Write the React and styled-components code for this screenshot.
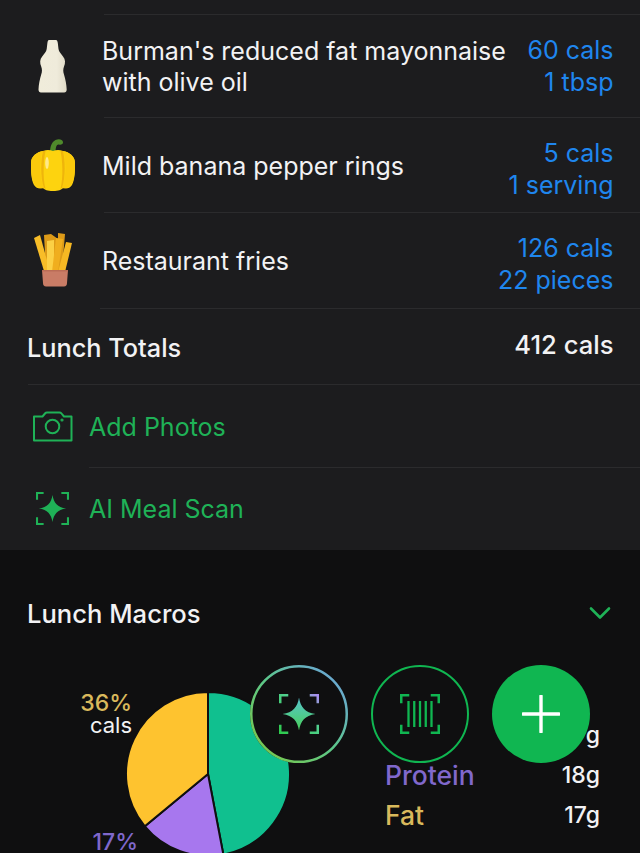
import styled, { createGlobalStyle } from "styled-components";

const COLORS = {
  card: "#1c1c1e",
  page: "#0f0f10",
  line: "#2b2b2d",
  text: "#f2f2f4",
  blue: "#1f86ee",
  green: "#1fb257",
  fab: "#10b651",
  teal: "#10c08f",
  purple: "#a777ee",
  yellow: "#fec32f",
  purpleText: "#8068cc",
  yellowText: "#d9b95c",
};

const GlobalStyle = createGlobalStyle`
  html, body { margin: 0; padding: 0; background: ${COLORS.page}; }
  body { font-family: Inter, "Liberation Sans", sans-serif; }
`;

const Screen = styled.div`
  position: relative;
  width: 640px;
  height: 853px;
  overflow: hidden;
  background: ${COLORS.page};
  color: ${COLORS.text};
`;

const Card = styled.section`
  background: ${COLORS.card};
  padding-top: 14px;
  height: 536px;
`;

const FoodRow = styled.div`
  display: flex;
  height: ${(p) => p.$h}px;
`;

const FoodIcon = styled.div`
  width: 104px;
  flex: none;
  display: flex;
  align-items: center;
  justify-content: center;
  padding-left: 1px;
  box-sizing: border-box;
`;

const FoodBody = styled.div`
  flex: 1;
  display: flex;
  align-items: center;
  justify-content: space-between;
  border-top: 1px solid ${COLORS.line};
  padding-right: 26.5px;
`;

const FoodName = styled.div`
  font-size: 25px;
  line-height: 31px;
  margin-left: -2px;
  padding-top: 2px;
  white-space: nowrap;
`;

const FoodCals = styled.div`
  align-self: flex-start;
  padding-top: 20px;
  font-size: 25px;
  line-height: 31.5px;
  color: ${COLORS.blue};
  text-align: right;
  white-space: nowrap;
`;

const Separator = styled.div`
  height: 1px;
  margin-left: 100px;
  background: ${COLORS.line};
`;

const TotalsRow = styled.div`
  height: 75px;
  padding: 0 26.5px 0 27px;
  display: flex;
  justify-content: space-between;
  align-items: center;
`;

const TotalsLabel = styled.div`
  font-size: 25.3px;
  font-weight: 500;
  margin-top: 2px;
`;

const TotalsValue = styled.div`
  font-size: 25.6px;
  font-weight: 500;
  margin-top: -4px;
`;

const ActionRow = styled.div`
  height: ${(p) => (p.$first ? 82 : 83)}px;
  display: flex;
`;

const ActionIcon = styled.div`
  width: ${(p) => (p.$first ? 61 : 89)}px;
  flex: none;
  display: flex;
  align-items: center;
  justify-content: ${(p) => (p.$first ? "flex-start" : "center")};
  padding-left: ${(p) => (p.$first ? 5 : 16)}px;
  box-sizing: border-box;
`;

const ActionLabel = styled.div`
  flex: 1;
  display: flex;
  align-items: center;
  font-size: 25px;
  color: ${COLORS.green};
  border-top: 1px solid ${(p) => (p.$first ? "transparent" : COLORS.line)};
`;

const FirstActionWrap = styled.div`
  border-top: 1px solid ${COLORS.line};
  margin-left: 28px;
`;

const MacrosSection = styled.section`
  padding: 0 27px;
`;

const MacrosHeader = styled.div`
  display: flex;
  align-items: center;
  justify-content: space-between;
  height: 126px;
  padding-right: 2px;
`;

const MacrosTitle = styled.h2`
  margin: 0;
  font-size: 25.6px;
  font-weight: 500;
`;

const MacrosBody = styled.div`
  display: flex;
  height: 200px;
`;

const ChartWrap = styled.div`
  position: relative;
  width: 358px;
  flex: none;
`;

const PieSvg = styled.svg`
  position: absolute;
  left: 99px;
  top: 16px;
`;

const PctLabel = styled.div`
  position: absolute;
  right: ${(p) => p.$right}px;
  top: ${(p) => p.$top}px;
  text-align: right;
  font-size: 22px;
  line-height: 22px;
  color: ${COLORS.text};
`;

const Pct = styled.div`
  font-size: 23px;
  color: ${(p) => p.$color};
  font-weight: 500;
`;

const MacroList = styled.div`
  flex: 1;
  display: flex;
  flex-direction: column;
  padding-top: 39px;
  padding-right: 13px;
`;

const MacroRow = styled.div`
  display: flex;
  justify-content: space-between;
  align-items: center;
  height: 40px;
`;

const MacroName = styled.span`
  font-size: 26.5px;
  font-weight: 500;
  color: ${(p) => p.$color};
`;

const MacroValue = styled.span`
  font-size: 23px;
  font-weight: 500;
`;

const Fab = styled.button`
  position: absolute;
  top: 665px;
  left: ${(p) => p.$left}px;
  width: 98px;
  height: 98px;
  padding: 0;
  box-sizing: border-box;
  border-radius: 50%;
  display: flex;
  align-items: center;
  justify-content: center;
  background: ${(p) => p.$bg || COLORS.page};
  border: ${(p) => (p.$ring ? `2.5px solid ${p.$ring}` : "none")};
`;

const FabRingSvg = styled.svg`
  position: absolute;
  left: 0;
  top: 0;
`;

const MayoIcon = () => (
  <svg width="29" height="54" viewBox="0 0 29 54">
    <defs>
      <linearGradient id="mayo" x1="0" x2="1" y1="0" y2="0">
        <stop offset="0" stopColor="#f0ecda" />
        <stop offset="0.65" stopColor="#efebdb" />
        <stop offset="1" stopColor="#dfdac6" />
      </linearGradient>
    </defs>
    <path
      d="M11 1h7c1 0 1.500 1 1.800 3l.7 6c.5 3 2 4 4.500 7.500 2.500 3 2.500 6.500 1 10-1 3-1 5 0 8 1.500 5 2.500 10 2.700 15 0 2-1 3-2.500 3H3C1.500 53.500.5 52.500.5 50.500c.2-5 1.200-10 2.700-15 1-3 1-5 0-8-1.500-3.500-1.500-7 1-10C6.700 14 8.200 13 8.700 10l.7-6c.3-2 .6-3 1.600-3z"
      fill="url(#mayo)"
    />
  </svg>
);

const PepperIcon = () => (
  <svg width="44" height="53" viewBox="0 0 44 53">
    <path d="M19 15c0-6 1.500-11 5.500-13 3-1.500 7-1 7.500 2 .4 2.500-2.500 3-4 2.500-2.500-.5-3.500 3-3.500 8.500z" fill="#4f8a2b" />
    <path
      d="M12 13c4-1.500 7-1 10 0 3-1 6-1.500 10 0 6 1 12 5 12 12 0 8 0 16-3 22-2 3.500-6 4-9 3-2 2-4 3-10 3s-8-1-10-3c-3 1-7 .5-9-3-3-6-3-14-3-22 0-7 6-11 12-12z"
      fill="#fdd30f"
    />
    <path d="M12 13C9 19 8 39 13 50c-2 .5-6 .5-9-3C0 41 0 33 0 25c0-7 6-11 12-12zM32 13c3 6 4 26-1 37 2 .5 6 .5 9-3 4-6 4-14 4-22 0-7-6-11-12-12z" fill="#fbca0c" />
    <path d="M12 13c-2 8-3 26 1 37l1.500 1c-3-12-2-29 0-38zM32 13c2 8 3 26-1 37l-1.500 1c3-12 2-29 0-38z" fill="#efb50b" />
    <ellipse cx="16" cy="25" rx="1.800" ry="6" fill="#ffe98a" />
  </svg>
);

const FriesIcon = () => (
  <svg width="38" height="54" viewBox="0 0 38 54">
    <path d="M10 2l7-1 7 5 0-6 7 1-3 37H12z" fill="#dc9a18" />
    <path d="M0 5l6-3 10 36h-6z" fill="#f8bd28" />
    <path d="M32 9l6 1-7 29h-7z" fill="#f6b823" />
    <path d="M13 8l7-1v32h-7z" fill="#fcd045" />
    <path d="M22 5l7 1-5 33h-6z" fill="#f0ae1e" />
    <path d="M8 37h26l-1 13c0 2-1 3.500-3 3.500H12c-2 0-3-1.500-3-3.500z" fill="#c97c66" />
    <path d="M8 37h26v1.500H8z" fill="#ba6c56" />
  </svg>
);

const CameraIcon = () => (
  <svg width="40" height="31" viewBox="0 0 40 31" fill="none" stroke={COLORS.green} strokeWidth="2">
    <path d="M1 5.500h8.500L12 2.500q.8-1 2-1h12.500q1.200 0 2 1l2.500 3h7.500V29.500H1z" strokeLinejoin="round" />
    <circle cx="19.500" cy="15.500" r="6.800" />
    <circle cx="29" cy="9" r="0.600" fill={COLORS.green} />
  </svg>
);

const Corners = ({ size, stroke, width = 2.500 }) => {
  const a = 8;
  const e = size - 1.250;
  const s = 1.250;
  return (
    <path
      d={`M${s} ${a + s}V${s}H${a + s}M${e - a} ${s}H${e}V${a + s}M${e} ${e - a}V${e}H${e - a}M${a + s} ${e}H${s}V${e - a}`}
      fill="none"
      stroke={stroke}
      strokeWidth={width}
    />
  );
};

const SPARK = "M20 3.500C21.500 13 26 18.500 36.500 20 26 21.500 21.500 27 20 36.500 18.500 27 14 21.500 3.500 20 14 18.500 18.500 13 20 3.500Z";

const ScanIcon = () => (
  <svg width="33" height="33" viewBox="0 0 40 40">
    <Corners size={40} stroke={COLORS.green} />
    <path d={SPARK} fill={COLORS.green} />
  </svg>
);

const GradientScanIcon = () => (
  <svg width="40" height="40" viewBox="0 0 40 40">
    <defs>
      <linearGradient id="scanCorners" x1="0" y1="1" x2="1" y2="0">
        <stop offset="0" stopColor="#2ecb4e" />
        <stop offset="0.6" stopColor="#52d090" />
        <stop offset="1" stopColor="#a98cf0" />
      </linearGradient>
      <linearGradient id="scanSpark" x1="0" y1="0" x2="0" y2="1">
        <stop offset="0" stopColor="#58c4d0" />
        <stop offset="1" stopColor="#48d058" />
      </linearGradient>
    </defs>
    <Corners size={40} stroke="url(#scanCorners)" />
    <path d={SPARK} fill="url(#scanSpark)" />
  </svg>
);

const BarcodeIcon = () => (
  <svg width="40" height="40" viewBox="0 0 40 40" stroke={COLORS.fab} fill="none">
    <Corners size={40} stroke={COLORS.fab} />
    <path d="M8.500 7v26M14.250 7v26M20 7v26M25.750 7v26M31.500 7v26" strokeWidth="2.300" />
  </svg>
);

const PlusIcon = () => (
  <svg width="38" height="38" viewBox="0 0 38 38" stroke="#fff" strokeWidth="3.400" strokeLinecap="round">
    <path d="M19 1v36M1 19h36" />
  </svg>
);

const Chevron = () => (
  <svg width="22" height="14" viewBox="0 0 22 14" fill="none" stroke={COLORS.green} strokeWidth="2.600" strokeLinecap="round" strokeLinejoin="round">
    <path d="M2 2.500l9 9 9-9" />
  </svg>
);

// clockwise from the top, each slice as a share of the circle
const SLICES = [
  { share: 0.47, color: COLORS.teal },
  { share: 0.17, color: COLORS.purple },
  { share: 0.36, color: COLORS.yellow },
];

const slicePath = (from, to, r) => {
  const pt = (t) => {
    const a = t * 2 * Math.PI;
    return `${r + r * Math.sin(a)} ${r - r * Math.cos(a)}`;
  };
  return `M${r} ${r}L${pt(from)}A${r} ${r} 0 ${to - from > 0.5 ? 1 : 0} 1 ${pt(to)}Z`;
};

const Pie = () => {
  let at = 0;
  return (
    <PieSvg width="164" height="164" viewBox="0 0 164 164">
      {SLICES.map((s) => {
        const d = slicePath(at, at + s.share, 82);
        at += s.share;
        return <path key={s.color} d={d} fill={s.color} stroke={COLORS.page} strokeWidth="2" />;
      })}
    </PieSvg>
  );
};

const FOODS = [
  { h: 103, icon: <MayoIcon />, name: ["Burman's reduced fat mayonnaise", "with olive oil"], cals: "60 cals", qty: "1 tbsp" },
  { h: 95, icon: <PepperIcon />, name: ["Mild banana pepper rings"], cals: "5 cals", qty: "1 serving" },
  { h: 96, icon: <FriesIcon />, name: ["Restaurant fries"], cals: "126 cals", qty: "22 pieces" },
];

export default function App() {
  return (
    <Screen>
      <GlobalStyle />
      <Card>
        {FOODS.map((f) => (
          <FoodRow key={f.cals} $h={f.h}>
            <FoodIcon>{f.icon}</FoodIcon>
            <FoodBody>
              <FoodName>
                {f.name.map((line) => (
                  <div key={line}>{line}</div>
                ))}
              </FoodName>
              <FoodCals>
                <div>{f.cals}</div>
                <div>{f.qty}</div>
              </FoodCals>
            </FoodBody>
          </FoodRow>
        ))}
        <Separator />
        <TotalsRow>
          <TotalsLabel>Lunch Totals</TotalsLabel>
          <TotalsValue>412 cals</TotalsValue>
        </TotalsRow>
        <FirstActionWrap>
          <ActionRow $first>
            <ActionIcon $first>
              <CameraIcon />
            </ActionIcon>
            <ActionLabel $first>Add Photos</ActionLabel>
          </ActionRow>
        </FirstActionWrap>
        <ActionRow>
          <ActionIcon>
            <ScanIcon />
          </ActionIcon>
          <ActionLabel>AI Meal Scan</ActionLabel>
        </ActionRow>
      </Card>
      <MacrosSection>
        <MacrosHeader>
          <MacrosTitle>Lunch Macros</MacrosTitle>
          <Chevron />
        </MacrosHeader>
        <MacrosBody>
          <ChartWrap>
            <Pie />
            <PctLabel $right={253} $top={16}>
              <Pct $color={COLORS.yellowText}>36%</Pct>
              cals
            </PctLabel>
            <PctLabel $right={247} $top={155}>
              <Pct $color={COLORS.purpleText}>17%</Pct>
            </PctLabel>
          </ChartWrap>
          <MacroList>
            <MacroRow>
              <MacroName $color={COLORS.teal}>Carbs</MacroName>
              <MacroValue>47g</MacroValue>
            </MacroRow>
            <MacroRow>
              <MacroName $color={COLORS.purpleText}>Protein</MacroName>
              <MacroValue>18g</MacroValue>
            </MacroRow>
            <MacroRow>
              <MacroName $color={COLORS.yellowText}>Fat</MacroName>
              <MacroValue>17g</MacroValue>
            </MacroRow>
          </MacroList>
        </MacrosBody>
      </MacrosSection>
      <Fab $left={250}>
        <FabRingSvg width="98" height="98" viewBox="0 0 98 98" fill="none">
          <defs>
            <linearGradient id="ring" x1="0" y1="1" x2="1" y2="0">
              <stop offset="0" stopColor="#7fc940" />
              <stop offset="0.5" stopColor="#5cc78a" />
              <stop offset="1" stopColor="#6f9fe8" />
            </linearGradient>
          </defs>
          <circle cx="49" cy="49" r="47.750" stroke="url(#ring)" strokeWidth="2.500" />
        </FabRingSvg>
        <GradientScanIcon />
      </Fab>
      <Fab $left={371} $ring={COLORS.fab}>
        <BarcodeIcon />
      </Fab>
      <Fab $left={492} $bg={COLORS.fab}>
        <PlusIcon />
      </Fab>
    </Screen>
  );
}
